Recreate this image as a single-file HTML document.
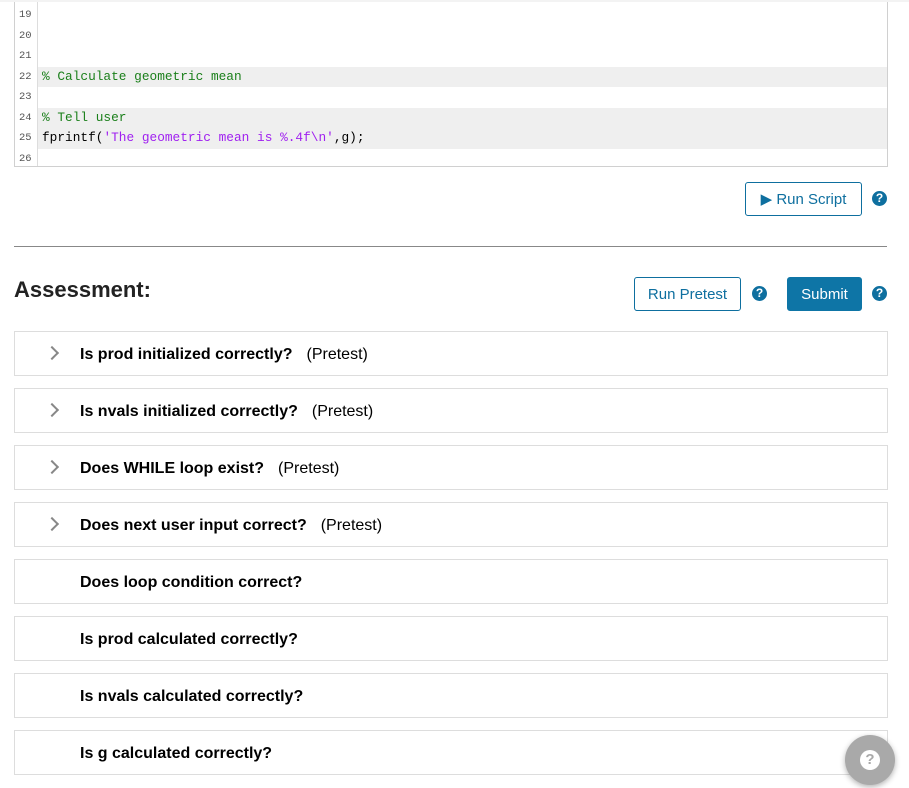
<!DOCTYPE html>
<html><head><style>
body{margin:0;width:909px;height:788px;background:#fff;font-family:"Liberation Sans",sans-serif;position:relative;overflow:hidden}
.top{position:absolute;left:0;top:0;width:909px;height:2px;background:#f3f3f3}
.ed{position:absolute;left:14px;top:2px;width:872px;height:164px;border:1px solid #d0d0d0;border-top:none;background:#fff}
.gut{position:absolute;left:0;top:0;width:22px;height:164px;border-right:1px solid #ddd;background:#fff}
.ln{position:absolute;left:0;width:872px;height:20.5px;font-family:"Liberation Mono",monospace;font-size:12.8px;line-height:20.5px}
.ln .n{position:absolute;left:4px;font-size:10.5px;color:#555}
.ln .c{position:absolute;left:27px;white-space:pre}
.hl{background:#efefef}
.g{color:#1a7f1a}.s{color:#a020f0}
.btn{position:absolute;box-sizing:border-box;border:1px solid #0e6f9f;border-radius:3px;color:#0e6f9f;font-size:15px;text-align:center;line-height:34px;height:34px}
.q{position:absolute;width:15px;height:15px;border-radius:50%;background:#0e6f9f;color:#fff;font-size:12px;font-weight:bold;text-align:center;line-height:15px}
.hr{position:absolute;left:14px;top:246px;width:873px;height:1px;background:#888}
.item{position:absolute;left:14px;width:872px;height:43px;border:1px solid #ddd;box-sizing:content-box}
.item b{position:absolute;left:65px;top:14px;font-size:16px;color:#000}
.item span.p{font-weight:normal;margin-left:14px}
.chev{position:absolute;left:32px;top:16px;width:8px;height:8px;border-right:2px solid #888;border-top:2px solid #888;transform:rotate(45deg)}
.fab{position:absolute;left:845px;top:735px;width:50px;height:50px;border-radius:50%;background:#a9a9a9;box-shadow:0 2px 6px rgba(0,0,0,.3)}
.fab div{position:absolute;left:15px;top:15px;width:20px;height:20px;border-radius:50%;background:#fff;color:#a9a9a9;font-weight:bold;font-size:15px;text-align:center;line-height:20px}
</style></head><body>
<div class="top"></div>
<div class="ed">
<div class="gut"></div>
<div class="ln" style="top:3px"><span class="n">19</span></div>
<div class="ln" style="top:23.5px"><span class="n">20</span></div>
<div class="ln" style="top:44px"><span class="n">21</span></div>
<div class="ln hl" style="top:64.5px;left:23px;width:849px"><span class="n" style="left:-19px">22</span><span class="c g" style="left:4px">% Calculate geometric mean</span></div>
<div class="ln" style="top:85px"><span class="n">23</span></div>
<div class="ln hl" style="top:105.5px;left:23px;width:849px"><span class="n" style="left:-19px">24</span><span class="c g" style="left:4px">% Tell user</span></div>
<div class="ln hl" style="top:126px;left:23px;width:849px"><span class="n" style="left:-19px">25</span><span class="c" style="left:4px">fprintf(<span class="s">'The geometric mean is %.4f\n'</span>,g);</span></div>
<div class="ln" style="top:146.5px"><span class="n">26</span></div>
</div>
<div class="btn" style="left:745px;top:182px;width:117px">&#9654; Run Script</div>
<div class="q" style="left:872px;top:191px">?</div>
<div class="hr"></div>
<div style="position:absolute;left:14px;top:277px;font-size:22px;font-weight:bold;color:#222">Assessment:</div>
<div class="btn" style="left:634px;top:277px;width:107px">Run Pretest</div>
<div class="q" style="left:752px;top:286px">?</div>
<div class="btn" style="left:787px;top:277px;width:75px;background:#0e75a6;color:#fff;border-color:#0e75a6">Submit</div>
<div class="q" style="left:872px;top:286px">?</div>
<div class="item" style="top:331px"><i class="chev"></i><b>Is prod initialized correctly?<span class="p">(Pretest)</span></b></div>
<div class="item" style="top:388px"><i class="chev"></i><b>Is nvals initialized correctly?<span class="p">(Pretest)</span></b></div>
<div class="item" style="top:445px"><i class="chev"></i><b>Does WHILE loop exist?<span class="p">(Pretest)</span></b></div>
<div class="item" style="top:502px"><i class="chev"></i><b>Does next user input correct?<span class="p">(Pretest)</span></b></div>
<div class="item" style="top:559px"><b>Does loop condition correct?</b></div>
<div class="item" style="top:616px"><b>Is prod calculated correctly?</b></div>
<div class="item" style="top:673px"><b>Is nvals calculated correctly?</b></div>
<div class="item" style="top:730px"><b>Is g calculated correctly?</b></div>
<div class="fab"><div>?</div></div>
</body></html>
